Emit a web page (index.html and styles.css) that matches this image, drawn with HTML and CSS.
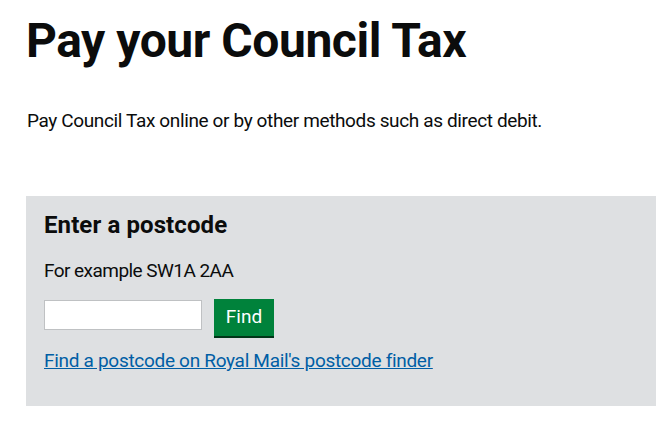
FILE: index.html
```html
<!DOCTYPE html>
<html lang="en">
<head>
<meta charset="utf-8">
<title>Pay your Council Tax</title>
<link rel="stylesheet" href="styles.css">
</head>
<body>
<main class="page">
  <h1 class="title">Pay your Council Tax</h1>
  <p class="lead">Pay Council Tax online or by other methods such as direct debit.</p>
  <section class="panel">
    <h2 class="panel-title">Enter a postcode</h2>
    <p class="hint">For example SW1A 2AA</p>
    <form class="search">
      <input class="postcode" type="text" aria-label="Postcode">
      <button class="find" type="button">Find</button>
    </form>
    <p class="help"><a class="link" href="#">Find a postcode on Royal Mail's postcode finder</a></p>
  </section>
</main>
</body>
</html>
```

FILE: styles.css
```css
html, body {
  margin: 0;
  padding: 0;
  background: #fff;
}
body {
  font-family: Roboto, "Liberation Sans", Arial, sans-serif;
  color: #0b0c0c;
}
.page {
  padding: 15px 15px 0 26px;
}
.title {
  margin: 0;
  font-size: 48px;
  line-height: 52px;
  font-weight: 700;
  letter-spacing: -0.45px;
}
.lead {
  margin: 41px 0 0 1px;
  font-size: 19px;
  line-height: 25px;
  letter-spacing: -0.37px;
}
.panel {
  margin-top: 63px;
  background: #dee0e2;
  padding: 14px 18px 33px;
}
.panel-title {
  margin: 0;
  font-size: 24px;
  line-height: 30px;
  font-weight: 700;
  letter-spacing: 0.1px;
}
.hint {
  margin: 18px 0 0;
  font-size: 19px;
  line-height: 25px;
  letter-spacing: -0.55px;
}
.search {
  display: flex;
  align-items: flex-start;
  gap: 12px;
  margin: 16px 0 0;
}
.postcode {
  box-sizing: border-box;
  width: 158px;
  height: 30px;
  margin: 1px 0 0;
  border: 1px solid #bfc1c3;
  background: #fff;
  padding: 0 6px;
  font: inherit;
}
.find {
  box-sizing: border-box;
  height: 39px;
  width: 60px;
  margin: 0;
  border: 0;
  background: #00823b;
  color: #fff;
  font-family: inherit;
  font-size: 19px;
  line-height: 25px;
  box-shadow: inset 0 -2px 0 #003618;
  padding: 5px 0 9px;
}
.help {
  margin: 10px 0 0;
  font-size: 19px;
  line-height: 25px;
  letter-spacing: -0.3px;
}
.link {
  color: #005ea5;
  text-decoration: underline;
}
```
